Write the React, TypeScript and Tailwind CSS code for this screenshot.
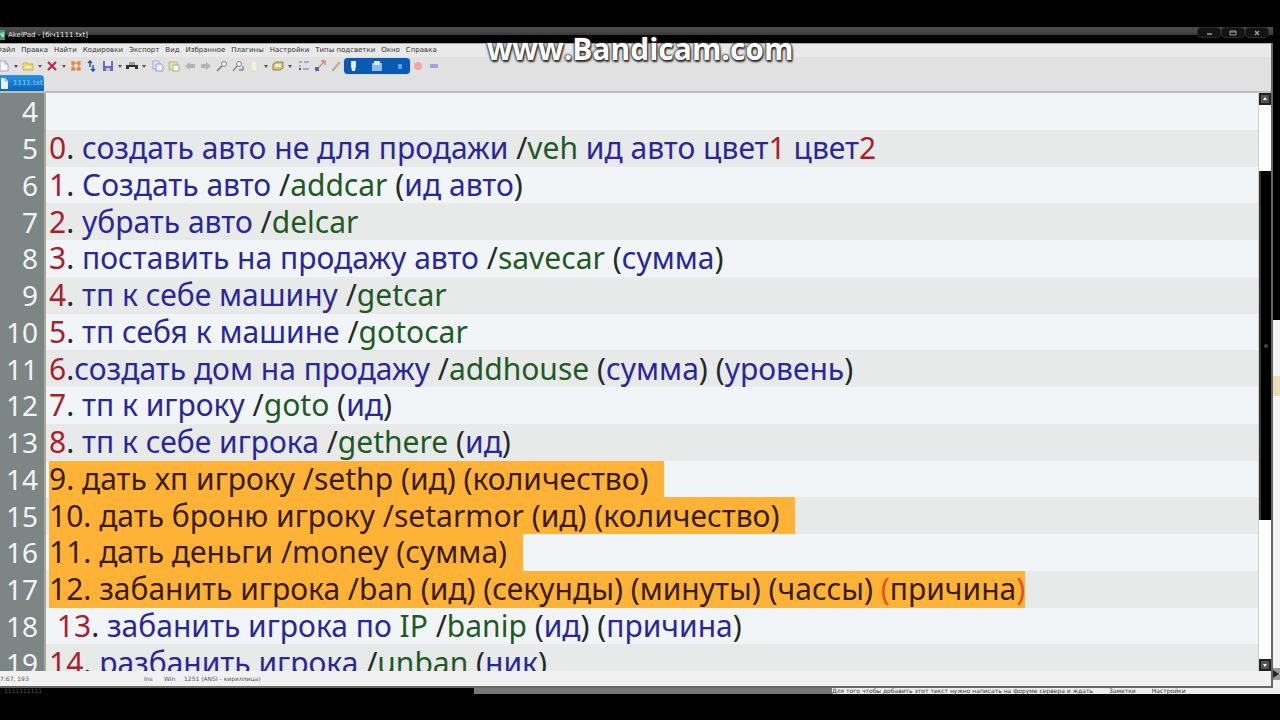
import type { ReactNode } from 'react'
import clsx from 'clsx'

type Kind = 'num' | 'word' | 'cmd' | 'sym' | 'match'

interface Line {
  no: number
  text: string
  selected?: boolean
}

const MENU = [
  'Файл',
  'Правка',
  'Найти',
  'Кодировки',
  'Экспорт',
  'Вид',
  'Избранное',
  'Плагины',
  'Настройки',
  'Типы подсветки',
  'Окно',
  'Справка',
]

const LINES: Line[] = [
  { no: 4, text: '' },
  { no: 5, text: '0. создать авто не для продажи /veh ид авто цвет1 цвет2' },
  { no: 6, text: '1. Создать авто /addcar (ид авто)' },
  { no: 7, text: '2. убрать авто /delcar' },
  { no: 8, text: '3. поставить на продажу авто /savecar (сумма)' },
  { no: 9, text: '4. тп к себе машину /getcar' },
  { no: 10, text: '5. тп себя к машине /gotocar' },
  { no: 11, text: '6.создать дом на продажу /addhouse (сумма) (уровень)' },
  { no: 12, text: '7. тп к игроку /goto (ид)' },
  { no: 13, text: '8. тп к себе игрока /gethere (ид)' },
  { no: 14, text: '9. дать хп игроку /sethp (ид) (количество)  ', selected: true },
  { no: 15, text: '10. дать броню игроку /setarmor (ид) (количество)  ', selected: true },
  { no: 16, text: '11. дать деньги /money (сумма)  ', selected: true },
  {
    no: 17,
    text: '12. забанить игрока /ban (ид) (секунды) (минуты) (чассы) (причина)',
    selected: true,
  },
  { no: 18, text: ' 13. забанить игрока по IP /banip (ид) (причина)' },
  { no: 19, text: '14. разбанить игрока /unban (ник)' },
]

const COLORS: Record<Kind, string> = {
  num: 'text-[#a8202c]',
  word: 'text-[#28289a]',
  cmd: 'text-[#1f5a24]',
  sym: 'text-[#222a2a]',
  match: 'text-[#e0561c]',
}

function kindOf(token: string): Kind {
  if (/^\d/.test(token)) return 'num'
  if (/^[а-яё]/i.test(token)) return 'word'
  if (/^[a-z]/i.test(token)) return 'cmd'
  return 'sym'
}

function CodeLine({ line }: { line: Line }) {
  const tokens = line.text.match(/\d+|[а-яё]+|[a-z]+|[^\da-zа-яё]+/gi) ?? []
  if (line.selected) {
    // The caret sits after the last bracket, so its pair is highlighted.
    const pair = line.text.endsWith(')')
    const open = pair ? line.text.lastIndexOf('(') : line.text.length
    return (
      <span className="flex items-center bg-[#feb336] text-[#3a1c10]">
        <span>{line.text.slice(0, open)}</span>
        {pair && (
          <>
            <span className={COLORS.match}>(</span>
            <span>{line.text.slice(open + 1, -1)}</span>
            <span className={COLORS.match}>)</span>
          </>
        )}
      </span>
    )
  }
  return (
    <span className="flex items-center">
      {tokens.map((t, i) => (
        <span key={i} className={COLORS[kindOf(t)]}>
          {t}
        </span>
      ))}
    </span>
  )
}

function Tool({ label, children }: { label: string; children: ReactNode }) {
  return (
    <button aria-label={label} className="flex h-4 w-4 shrink-0 items-center justify-center">
      <svg viewBox="0 0 12 12" className="h-3 w-3" fill="none">
        {children}
      </svg>
    </button>
  )
}

function Drop({ label }: { label: string }) {
  return (
    <button aria-label={label} className="flex h-4 w-2 shrink-0 items-center justify-center">
      <svg viewBox="0 0 4 3" className="h-[3px] w-1">
        <path d="M0 0h4L2 3z" fill="#555" />
      </svg>
    </button>
  )
}

function Toolbar() {
  return (
    <div className="flex h-[18px] items-center overflow-hidden">
      <div className="-ml-1 flex items-center">
        <Tool label="Новый">
          <path d="M2 1h5l3 3v7H2z" fill="#f6f6fd" stroke="#a5a5cf" />
          <path d="M7 1v3h3" stroke="#a5a5cf" />
        </Tool>
        <Drop label="Шаблоны" />
      </div>
      <div className="flex items-center">
        <Tool label="Открыть">
          <path d="M1 3h4l1 1h5v6H1z" fill="#e9da6c" stroke="#c9b64a" />
          <path d="M3 6h6v2H3z" fill="#fbf6c0" />
        </Tool>
        <Drop label="Недавние файлы" />
        <Tool label="Закрыть">
          <path d="M2 2l8 8M10 2l-8 8" stroke="#c0244a" strokeWidth="2.2" />
        </Tool>
        <Drop label="Закрыть другие" />
        <Tool label="Проекты">
          <path d="M1 1h4v4H1zM7 1h4v4H7zM1 7h4v4H1zM7 7h4v4H7z" fill="#f0a468" />
          <path d="M2 3h8M2 9h8M3 2v8M9 2v8" stroke="#d77b3c" />
        </Tool>
        <Tool label="Обновить">
          <path d="M4 7V1M2 3l2-2 2 2M7 5v6M5 9l2 2 2-2" stroke="#2c50b8" strokeWidth="1.5" />
        </Tool>
        <Tool label="Сохранить">
          <path d="M1 1h10v10H1z" fill="#6a6ac6" />
          <path d="M3 1h6v5H3z" fill="#e8e8f6" />
          <path d="M4 8h4v3H4z" fill="#c5c5e4" />
        </Tool>
        <Drop label="Сохранить как" />
        <Tool label="Печать">
          <path d="M3 2h6v3H3z" fill="#9a9a9a" />
          <path d="M0 5h12v4H0z" fill="#303030" />
          <path d="M3 7h6v3H3z" fill="#e4e4e4" />
        </Tool>
        <Drop label="Параметры печати" />
      </div>
      <div className="ml-0.5 flex items-center">
        <Tool label="Копировать">
          <path d="M1 1h5l2 2v6H1z" fill="#e8e8fc" stroke="#a0a0e0" />
          <path d="M4 4h5l2 2v5H4z" fill="#f2f2ff" stroke="#9393da" />
        </Tool>
        <Tool label="Вставить">
          <path d="M1 2h8v8H1z" fill="#e4deb0" stroke="#bcb47c" />
          <path d="M5 5h6v6H5z" fill="#f8f8ee" stroke="#b3ae8a" />
        </Tool>
        <Tool label="Отменить">
          <path d="M1 6l5-4v2h5v4H6v2z" fill="#b3b3b3" />
        </Tool>
        <Tool label="Повторить">
          <path d="M11 6L6 2v2H1v4h5v2z" fill="#b3b3b3" />
        </Tool>
        <Tool label="Найти">
          <circle cx="8" cy="4" r="2.5" fill="#eee" stroke="#888" />
          <path d="M6 6l-5 5" stroke="#777" strokeWidth="1.5" />
        </Tool>
        <Tool label="Заменить">
          <circle cx="7" cy="4" r="2.5" fill="#eee" stroke="#888" />
          <path d="M5 6l-4 5M7 10h4V6" stroke="#888" strokeWidth="1.4" />
        </Tool>
        <Tool label="Перейти">
          <path d="M3 1h6v10H3z" fill="#f3f2e0" stroke="#dedcc8" />
        </Tool>
        <Drop label="Закладки" />
        <Tool label="Кодировка">
          <path d="M1 4l3-2h7v6l-3 2H1z" fill="#d3c67c" stroke="#8d8350" />
          <path d="M3 4h6v3H3z" fill="#f0ebc4" />
        </Tool>
        <Drop label="Список кодировок" />
      </div>
      <div className="ml-0.5 flex items-center">
        <Tool label="Перенос строк">
          <path d="M1 2h3M6 2h5M1 6h2M5 9h6" stroke="#a092cc" strokeWidth="1.5" />
          <path d="M1 9h2" stroke="#5a4cb4" strokeWidth="2" />
        </Tool>
        <Tool label="Во весь экран">
          <path d="M1 7h4v4H1z" fill="#6060b8" />
          <path d="M5 7l5-5M7 1h4v4" stroke="#d08870" strokeWidth="1.4" />
        </Tool>
        <Tool label="Правка">
          <path d="M2 10l7-8 1 1-7 8z" fill="#c9ca96" stroke="#a9aa80" />
        </Tool>
      </div>
      <div className="flex h-4 w-[66px] shrink-0 items-center justify-between rounded-sm bg-[#0a5ab4] px-0.5 shadow-[0_0_1px_#4aa4ec]">
        <Tool label="Подсветка">
          <path d="M3 1h5v5L7 11H4L3 6z" fill="#dff0e4" />
        </Tool>
        <Tool label="Нумерация">
          <path d="M1 3h10v8H1z" fill="#90bce4" />
          <path d="M3 1h6v4H3z" fill="#d8ecfa" />
        </Tool>
        <Tool label="Символы">
          <path d="M4 4h4v5H4z" fill="#4da6f2" />
        </Tool>
      </div>
      <Tool label="Запись макроса">
        <circle cx="6" cy="6" r="4" fill="#f4a4a4" />
      </Tool>
      <Tool label="Свернуть блоки">
        <path d="M2 4h8v4H2z" fill="#a3a3e0" />
      </Tool>
    </div>
  )
}

function TitleBar() {
  return (
    <header className="flex h-4 items-center bg-linear-to-b from-[#4a4a4a] from-20% via-[#383838] via-50% to-black to-55% font-['DejaVu_Sans'] text-[7px] text-[#e6e6e6]">
      <svg viewBox="0 0 6 10" className="mr-0.5 h-2.5 w-1.5">
        <path d="M0 0h5v10H0z" fill="#3c9c68" />
        <path d="M0 3l3 4V2" stroke="#fff" fill="none" />
      </svg>
      <h1>AkelPad - [біч1111.txt]</h1>
      <div className="mr-1 ml-auto flex self-start">
        {['Свернуть', 'Развернуть', 'Закрыть'].map((label, i) => (
          <button
            key={label}
            aria-label={label}
            className="flex h-[11px] w-6 items-center justify-center rounded-sm border border-[#2c2c2c] bg-[#141414]"
          >
            <svg viewBox="0 0 8 8" className="h-2 w-2" fill="none" stroke="#999">
              {i === 0 && <path d="M2 5h5" strokeWidth="1.5" />}
              {i === 1 && <path d="M1 2h6v4H1zM1 3h6" />}
              {i === 2 && <path d="M2 2l4 4M6 2L2 6" strokeWidth="1.5" />}
            </svg>
          </button>
        ))}
      </div>
    </header>
  )
}

function ScrollBar() {
  return (
    <div className="flex w-[13px] shrink-0 flex-col border-l border-[#cfcfcf] bg-white">
      <button
        aria-label="Вверх"
        className="flex h-3 items-center justify-center border-2 border-[#222] bg-[#555]"
      >
        <svg viewBox="0 0 4 4" className="h-1 w-1">
          <path d="M0 3l2-3 2 3z" fill="#fff" />
        </svg>
      </button>
      <div className="flex flex-1 flex-col">
        <div className="basis-[66px]" />
        <div className="flex basis-[349px] items-center justify-center border-l-2 border-[#333] bg-black">
          <div className="h-1 w-1 rounded-full bg-[#444]" />
        </div>
      </div>
      <button
        aria-label="Вниз"
        className="flex h-3 items-center justify-center border-2 border-[#222] bg-[#555]"
      >
        <svg viewBox="0 0 4 4" className="h-1 w-1">
          <path d="M0 1l2 3 2-3z" fill="#fff" />
        </svg>
      </button>
    </div>
  )
}

function Editor() {
  return (
    <main className="flex min-h-0 flex-1 overflow-hidden border-t-2 border-[#bdbdbd]">
      <div className="min-w-0 flex-1 overflow-hidden bg-[#7d8685] font-['Noto_Sans',sans-serif] text-[30px] leading-9 whitespace-pre">
        <ol className="grid h-[588px] auto-rows-fr">
          {LINES.map((line) => (
            <li key={line.no} className="flex min-h-0">
              <span className="flex w-[46px] shrink-0 items-center justify-end border-r-2 border-[#a5a99c] pr-1.5 text-[28px] text-[#f2f4f4]">
                {line.no}
              </span>
              <div
                className={clsx(
                  'flex min-w-0 flex-1 pl-[3px]',
                  line.no % 2 ? 'bg-[#e8eaea]' : 'bg-[#f1f5f8]',
                )}
              >
                <CodeLine line={line} />
              </div>
            </li>
          ))}
        </ol>
      </div>
      <ScrollBar />
    </main>
  )
}

export default function App() {
  return (
    <div className="relative flex h-screen flex-col overflow-hidden bg-black pt-[27px]">
      <div className="flex min-h-0 flex-1">
        <div className="flex min-w-0 flex-1 flex-col">
          <TitleBar />
          <div className="flex min-h-0 flex-1 flex-col border-r-2 border-b-2 border-[#666] bg-[#e1e1e1] font-['DejaVu_Sans']">
            <nav className="-ml-1 flex h-3.5 shrink-0 items-center gap-1.5 border-t border-[#aaa] bg-[#e9e9e9] text-[7px] whitespace-nowrap text-[#333]">
              {MENU.map((item) => (
                <button key={item}>{item}</button>
              ))}
            </nav>
            <Toolbar />
            <div className="flex h-4 shrink-0">
              <button className="flex w-11 items-center gap-1 rounded-tr-sm bg-linear-to-b from-[#2c96e2] to-[#0a64b8] text-[7px] text-[#8fd0ff]">
                <svg viewBox="0 0 9 11" className="h-[11px] w-[9px] shrink-0">
                  <path d="M1 0h4l3 3v8H1z" fill="#e4f2fc" />
                  <path d="M5 0v3h3" fill="none" stroke="#7cb4e0" />
                </svg>
                1111.txt
              </button>
            </div>
            <Editor />
            <footer className="flex h-[15px] shrink-0 items-center bg-[#f1f1f1] text-[6px] whitespace-pre text-[#555]">
              <span className="w-36">7:67, 193</span>
              <span className="w-5">Ins</span>
              <span className="w-5">Win</span>
              <span>1251 (ANSI - кириллица)</span>
            </footer>
          </div>
        </div>
        {/* Edge of the window behind this one */}
        <div className="flex w-[7px] flex-col">
          <div className="h-[293px] shrink-0" />
          <div className="flex flex-1 flex-col justify-between bg-[#f4f4f4] pt-14 pb-2">
            <div className="h-5 bg-[#e8dfb8]" />
            <svg viewBox="0 0 7 12" className="h-3 w-[7px]">
              <path d="M0 0h7v12H0z" fill="#999" />
              <path d="M0 2l6 4-6 4z" fill="#222" />
            </svg>
          </div>
        </div>
      </div>
      <div className="flex h-1.5 shrink-0 overflow-hidden font-['DejaVu_Sans'] text-[6px] leading-[6px] whitespace-nowrap">
        <div className="w-[37%] pl-1 text-[#555]">1111111111</div>
        <div className="w-[28%] bg-[#777]" />
        <div className="flex flex-1 items-center gap-4 bg-[#eee] text-[#333]">
          <span>Для того чтобы добавить этот текст нужно написать на форуме сервера и ждать</span>
          <span>Заметки</span>
          <span>Настройки</span>
        </div>
      </div>
      <div className="h-[26px] shrink-0" />
      <div className="pointer-events-none absolute inset-x-0 top-7 text-center font-['Open_Sans'] text-[30px] leading-[42px] font-bold text-white [text-shadow:0_0_2px_#222,0_0_2px_#222,1px_2px_2px_#333,0_0_3px_#555]">
        www.Bandicam.com
      </div>
    </div>
  )
}
